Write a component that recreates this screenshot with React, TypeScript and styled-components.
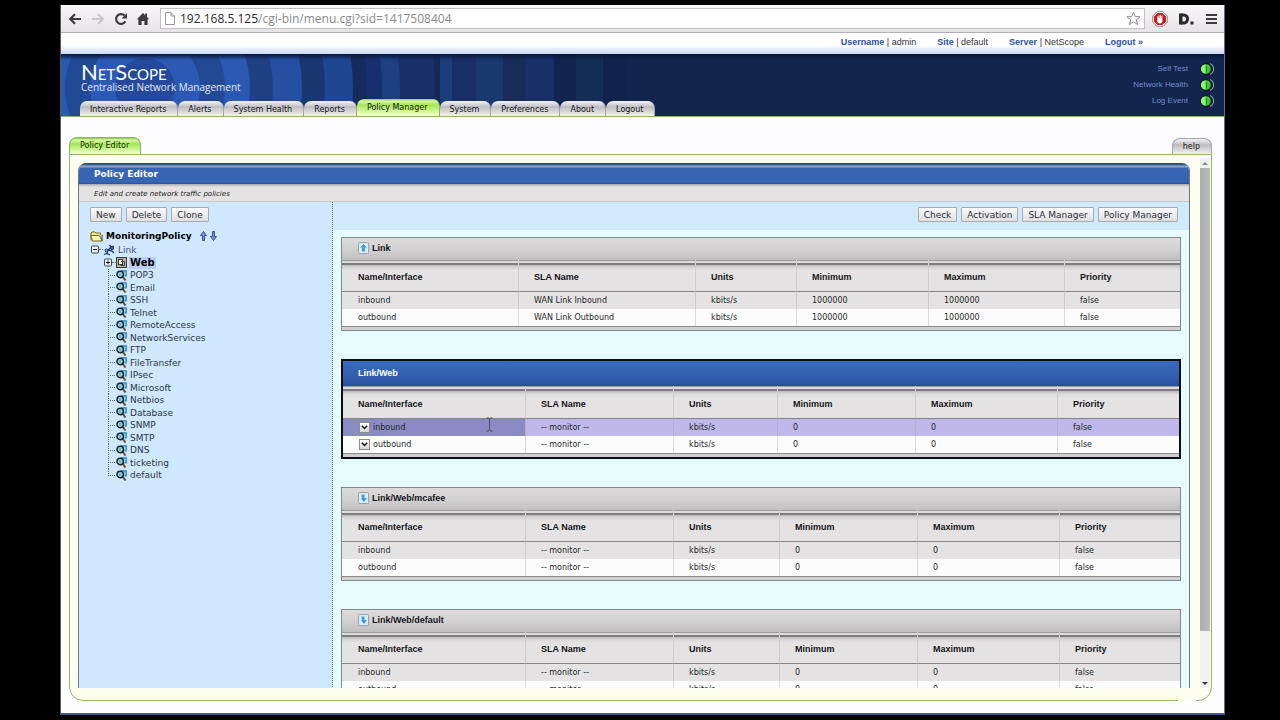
import React from 'react';
import styled, { createGlobalStyle, css } from 'styled-components';

const ui = "'DejaVu Sans', Verdana, sans-serif";
const arial = "'Liberation Sans', Arial, sans-serif";
const humanist = "'Open Sans', 'Noto Sans', sans-serif";

const GlobalStyle = createGlobalStyle`
  *, *::before, *::after { box-sizing: border-box; }
  body { margin: 0; background: #000; font-family: ${ui}; color: #222; }
  button { font-family: inherit; cursor: pointer; }
  a { color: inherit; text-decoration: none; }
  svg { display: block; }
`;

const Desktop = styled.div`
  height: 100vh;
  min-height: 480px;
  padding: 5px 55px 5px 60px;
  background: #000;
`;

const Browser = styled.div`
  display: flex;
  flex-direction: column;
  height: 100%;
  background: #fdfcfe;
  border: solid #55555c;
  border-width: 0 1px 2px;
  border-right-color: #6a6aa0;
  border-bottom-color: #3c5a94;
`;

const Toolbar = styled.div`
  display: flex;
  flex: none;
  align-items: center;
  height: 28px;
  padding: 0 1px 0 6px;
  background: linear-gradient(#f8f6f8, #e6e4e7);
  border-bottom: 1px solid #b3b1b4;
`;

const ChromeButton = styled.button<{ $w: number }>`
  display: grid;
  place-items: center;
  width: ${p => p.$w}px;
  height: 20px;
  padding: 0;
  border: 0;
  background: none;
`;

const AddressBar = styled.div`
  display: flex;
  flex: 1;
  align-items: center;
  height: 21px;
  margin: 0 2px;
  padding: 0 3px 0 4px;
  background: #fff;
  border: 1px solid #c2c0c3;
`;

const Url = styled.span`
  flex: 1;
  margin-left: 5px;
  font: 12px/18px ${humanist};
  color: #8b898c;
  b { font-weight: 400; color: #2b2b2b; }
`;

const TopBar = styled.div`
  display: flex;
  flex: none;
  justify-content: flex-end;
  gap: 21px;
  height: 21px;
  padding-right: 81px;
  font: 9px/18px ${arial};
  color: #333;
  background: linear-gradient(#fff 0, #fff 12px, #cfdcf4 20px);
  b { color: #2d509c; }
`;

const Banner = styled.header`
  display: flex;
  position: relative;
  flex: none;
  justify-content: space-between;
  height: 63px;
  background: #12254f;
  border-bottom: 1px solid #8fae72;
  overflow: hidden;
`;

const Rings = styled.svg`
  position: absolute;
  inset: 0 auto auto 0;
`;

const BannerShade = styled.div`
  position: absolute;
  inset: 0 0 auto 0;
  height: 6px;
  background: linear-gradient(#081638, rgba(8, 22, 56, 0));
`;

const BannerMain = styled.div`
  display: flex;
  position: relative;
  flex-direction: column;
  justify-content: space-between;
  padding-left: 19px;
`;

const Brand = styled.div`
  padding: 9px 0 0 1px;
  color: #fff;
`;

const BrandName = styled.div`
  font: small-caps 22px/18px Lato, sans-serif;
`;

const Tagline = styled.div`
  font: 10px/12px ${humanist};
  color: #e4ebfa;
`;

const Tabs = styled.nav`
  display: flex;
  align-items: flex-end;
`;

const greenTab = css`
  background: linear-gradient(#8fc64a 0, #d9f7a8 2px, #a5e558 6px, #c9f58f 11px, #f4ffe2 100%);
  border-color: #86b85a;
`;

const greyTab = css`
  background: linear-gradient(#f2f2f7 0, #d9d9df 3px, #bdbcc0 6px, #d5d4d6 10px, #f2f2ef 100%);
  border-color: #a3a3ab;
`;

const Tab = styled.a<{ $active?: boolean }>`
  height: ${p => (p.$active ? 17 : 15)}px;
  padding: 1px 11px 0 10px;
  border: solid;
  border-width: 0 1px 0 0;
  border-radius: 7px 7px 0 0;
  font: 8px/16px ${ui};
  color: #16161c;
  white-space: nowrap;
  ${p => (p.$active ? greenTab : greyTab)}
`;

const StatusList = styled.ul`
  display: flex;
  position: relative;
  flex-direction: column;
  gap: 2px;
  margin: 0;
  padding: 8px 10px 0 0;
  list-style: none;
`;

const Status = styled.li`
  display: flex;
  align-items: center;
  justify-content: flex-end;
  gap: 12px;
  font: 8px/14px ${arial};
  color: #748cc6;
`;

const Main = styled.main`
  display: flex;
  flex: 1;
  flex-direction: column;
  min-height: 0;
  padding: 20px 12px 12px 8px;
`;

const SubTabs = styled.div`
  display: flex;
  flex: none;
  align-items: flex-end;
  justify-content: space-between;
  height: 17px;
`;

const SubTab = styled.a<{ $active?: boolean }>`
  position: relative;
  z-index: 1;
  height: ${p => (p.$active ? 17 : 16)}px;
  padding: 0 11px 0 10px;
  border: 1px solid;
  border-bottom: 0;
  border-radius: 8px 8px 0 0;
  font: 8px/16px ${ui};
  color: #1c2b14;
  ${p => (p.$active ? greenTab : greyTab)}
`;

const Frame = styled.div`
  display: flex;
  position: relative;
  flex: 1;
  gap: 10px;
  min-height: 0;
  padding: 8px 1px 12px 8px;
  background: #fefef0;
  border: 1px solid #93b56c;
  border-radius: 0 0 14px 14px;
`;

const FrameGap = styled.span`
  position: absolute;
  right: 15px;
  bottom: -1px;
  width: 18px;
  height: 2px;
  background: #fdfcfe;
`;

const Viewport = styled.div`
  flex: 1;
  min-width: 0;
  overflow: hidden;
`;

const Panel = styled.section`
  border: solid #6c7684;
  border-width: 0 1px;
  border-radius: 8px 8px 0 0;
  overflow: hidden;
`;

const PanelTitle = styled.h1`
  height: 21px;
  margin: 0;
  padding-left: 15px;
  font: bold 9px/22px ${ui};
  color: #fff;
  background: linear-gradient(#26478c 0, #26478c 1px, #4a63a4 2px, #8ba2d4 3px, #8ba2d4 4px, #3765b3 5px, #3765b3 19px, #2c4f92 21px);
`;

const PanelNote = styled.p`
  height: 18px;
  margin: 0;
  padding-left: 15px;
  font: italic 7px/20px ${ui};
  color: #1d1d1d;
  background: linear-gradient(#a9a8ac, #e4e2e3 3px);
  border-bottom: 1px solid #c9c7c9;
`;

const Columns = styled.div`
  display: flex;
`;

const Side = styled.aside`
  flex: none;
  width: 254px;
  padding: 5px 0 200px 11px;
  background: #d0e8fe;
  border-right: 1px dotted #66707c;
`;

const Content = styled.div`
  flex: 1;
  min-width: 0;
  background: #e6fcfb;
`;

const ButtonRow = styled.div`
  display: flex;
  gap: 4px;
`;

const ContentBar = styled(ButtonRow)`
  justify-content: flex-end;
  height: 28px;
  padding: 5px 11px 0 0;
  background: #d0e9fb;
`;

const Button = styled.button`
  height: 15px;
  padding: 0 5px;
  border: 1px solid #a7abb2;
  border-radius: 1px;
  background: linear-gradient(#fbfbfc, #dfdfe2);
  font-size: 9px;
  line-height: 12px;
  color: #2e2e33;
  white-space: nowrap;
`;

const TreeRoot = styled.div`
  display: flex;
  align-items: center;
  height: 14px;
  margin-top: 7px;
  font: bold 9px/14px ${ui};
  color: #000;
`;

const Arrows = styled.span`
  display: flex;
  gap: 3px;
  margin-left: 8px;
`;

const Tree = styled.ul`
  margin: 0;
  padding: 0;
  list-style: none;
  font: 9px/12px ${ui};
  color: #2b3746;
`;

const LinkNode = styled.li`
  > div { display: flex; align-items: center; height: 13px; padding-left: 1px; color: #4b4b78; }
`;

const Nested = styled(Tree)`
  padding-left: 14px;
`;

const Dash = styled.span<{ $w: number }>`
  width: ${p => p.$w}px;
  border-top: 1px dotted #5b6672;
`;

const Leaf = styled.li<{ $expandable?: boolean }>`
  display: flex;
  align-items: center;
  height: 12px;
  padding-left: ${p => (p.$expandable ? 0 : 4)}px;
  &:nth-child(odd) { height: 13px; }
`;

const Branch = styled.span<{ $last?: boolean }>`
  align-self: stretch;
  width: 8px;
  background:
    repeating-linear-gradient(#5b6672 0 1px, transparent 1px 2px) 0 0 / 1px ${p => (p.$last ? '50%' : '100%')} no-repeat,
    repeating-linear-gradient(90deg, #5b6672 0 1px, transparent 1px 2px) 0 50% / 8px 1px no-repeat;
`;

const Label = styled.a<{ $selected?: boolean }>`
  margin-left: 3px;
  ${p => p.$selected && css`
    margin-left: 2px;
    padding: 0 1px;
    font-weight: bold;
    font-size: 10px;
    color: #000;
    background: #b9cdf6;
  `}
`;

const Cards = styled.div`
  display: flex;
  flex-direction: column;
  gap: 28px;
  padding: 7px 8px 20px;
`;

const Card = styled.section<{ $selected?: boolean }>`
  border: ${p => (p.$selected ? '2px solid #0b0d14' : '1px solid #80898c')};
`;

const CardTitle = styled.h2<{ $selected?: boolean }>`
  display: flex;
  align-items: center;
  gap: 3px;
  height: ${p => (p.$selected ? 25 : 22)}px;
  margin: 0;
  padding: 0 0 2px ${p => (p.$selected ? 15 : 16)}px;
  font: bold 9px/20px ${arial};
  color: ${p => (p.$selected ? '#fff' : '#16161a')};
  background: ${p => (p.$selected
    ? 'linear-gradient(#3a69bb, #3462b2 50%, #27509a)'
    : 'linear-gradient(#dcdadb, #d3d1d2 50%, #c0bebf)')};
`;

const Grid = styled.table`
  width: 100%;
  table-layout: fixed;
  border-collapse: separate;
  border-spacing: 0;
  font: 8px/17px ${ui};
  color: #1f2a2a;
  background: #fdfcfd;
`;

const HeadCell = styled.th<{ $tall?: boolean }>`
  height: ${p => (p.$tall ? 33 : 32)}px;
  padding: ${p => (p.$tall ? 4 : 2)}px 0 0 15px;
  border-left: 1px solid #cfcdcf;
  border-bottom: 1px solid #858385;
  font: bold 9px/14px ${arial};
  text-align: left;
  color: #16161a;
  background: linear-gradient(#9c9a9c 0 1px, #dddbdc 1px 3px, #7f7d7e 3px 5px, #bdbbbc 5px, #dbd9da 8px, #e4e2e3 11px) border-box;
  &:first-child { padding-left: ${p => (p.$tall ? 15 : 16)}px; border-left: 0; }
`;

const Row = styled.tr<{ $tone: 'shade' | 'plain' | 'active' }>`
  background: ${p => ({ shade: '#e4e2e3', plain: '#fdfcfd', active: '#c0b8ea' })[p.$tone]};
`;

const Cell = styled.td<{ $hot?: boolean }>`
  position: relative;
  height: 17px;
  padding: 0 0 0 15px;
  border-left: 1px solid ${p => (p.$hot ? 'transparent' : 'rgba(160, 158, 164, 0.35)')};
  white-space: nowrap;
  background: ${p => (p.$hot ? '#8a8ac4' : 'none')};
  &:first-child { padding-left: 16px; border-left: 0; }
`;

const RowName = styled.span`
  display: flex;
  align-items: center;
  gap: 3px;
`;

const DropButton = styled.button`
  display: grid;
  place-items: center;
  width: 11px;
  height: 11px;
  padding: 0;
  border: 1px solid #8d8d94;
  background: linear-gradient(#fff, #d4d4d8);
`;

const TextCursor = styled.svg`
  position: absolute;
  right: 32px;
  top: -2px;
`;

const CardFoot = styled.div`
  height: 4px;
  border-top: 1px solid #8c8a8c;
  background: #cfd1d1;
`;

const ScrollTrack = styled.div`
  display: flex;
  flex: none;
  flex-direction: column;
  justify-content: space-between;
  width: 10px;
  margin: -5px 0 0;
  background: #f3f2f3;
`;

const ScrollArrow = styled.span`
  display: grid;
  place-items: center;
  height: 10px;
`;

const Thumb = styled.div`
  flex: 0 1 463px;
  margin-bottom: auto;
  background: linear-gradient(90deg, #adadad, #bdbdbd);
`;

const SCREEN_TABS = ['Interactive Reports', 'Alerts', 'System Health', 'Reports', 'Policy Manager', 'System', 'Preferences', 'About', 'Logout'];

const CLASSES = ['POP3', 'Email', 'SSH', 'Telnet', 'RemoteAccess', 'NetworkServices', 'FTP', 'FileTransfer', 'IPsec', 'Microsoft', 'Netbios', 'Database', 'SNMP', 'SMTP', 'DNS', 'ticketing', 'default'];

const HEADS = ['Name/Interface', 'SLA Name', 'Units', 'Minimum', 'Maximum', 'Priority'];

type Policy = {
  title: string;
  icon?: 'up' | 'down';
  widths: number[];
  rows: string[][];
};

const monitor = (name: string) => [name, '-- monitor --', 'kbits/s', '0', '0', 'false'];

const POLICIES: Policy[] = [
  {
    title: 'Link',
    icon: 'up',
    widths: [176, 177, 101, 132, 136, 116],
    rows: [
      ['inbound', 'WAN Link Inbound', 'kbits/s', '1000000', '1000000', 'false'],
      ['outbound', 'WAN Link Outbound', 'kbits/s', '1000000', '1000000', 'false'],
    ],
  },
  { title: 'Link/Web', widths: [182, 148, 104, 138, 142, 122], rows: [monitor('inbound'), monitor('outbound')] },
  { title: 'Link/Web/mcafee', icon: 'down', widths: [183, 148, 106, 138, 142, 121], rows: [monitor('inbound'), monitor('outbound')] },
  { title: 'Link/Web/default', icon: 'down', widths: [183, 148, 106, 138, 142, 121], rows: [monitor('inbound'), monitor('outbound')] },
];

const BackIcon = ({ color }: { color: string }) => (
  <svg width="14" height="12" viewBox="0 0 14 12" fill="none" stroke={color} strokeWidth="2.2">
    <path d="M13 6H3M7 1.2L2.2 6L7 10.8" />
  </svg>
);

const ForwardIcon = () => (
  <svg width="14" height="12" viewBox="0 0 14 12" fill="none" stroke="#c9c7ca" strokeWidth="2.2">
    <path d="M1 6h10M7 1.2L11.8 6L7 10.8" />
  </svg>
);

const ReloadIcon = () => (
  <svg width="14" height="14" viewBox="0 0 14 14" fill="none">
    <path d="M11.4 9.2A4.9 4.9 0 1 1 10.6 3.6" stroke="#3c3b3d" strokeWidth="2.2" />
    <path d="M13 1v5.4H7.6z" fill="#3c3b3d" />
  </svg>
);

const HomeIcon = () => (
  <svg width="14" height="14" viewBox="0 0 14 14" fill="#3c3b3d">
    <path d="M7 1L0.8 7.2h1.6V13h3.2V9h2.8v4h3.2V7.2h1.6L11 5V1.6H9.2v1.6z" />
  </svg>
);

const PageIcon = () => (
  <svg width="10" height="13" viewBox="0 0 10 13" fill="#fff" stroke="#9a989b">
    <path d="M0.5 0.5h5.5l3.5 3.5v8.5h-9zM6 0.5V4h3.5" />
  </svg>
);

const StarIcon = () => (
  <svg width="15" height="15" viewBox="0 0 15 15" fill="#fff" stroke="#8a888b">
    <path d="M7.5 1l1.7 4.6 4.9.2-3.8 3 1.3 4.7-4.1-2.7-4.1 2.7 1.3-4.7-3.8-3 4.9-.2z" />
  </svg>
);

const BlockIcon = () => (
  <svg width="16" height="16" viewBox="0 0 16 16">
    <path d="M5 .7h6L15.3 5v6L11 15.3H5L.7 11V5z" fill="#fff" stroke="#b05050" strokeWidth=".8" />
    <path d="M5.6 2h4.8L14 5.6v4.8L10.4 14H5.6L2 10.4V5.6z" fill="#c81a20" />
    <path d="M5.3 8V5.3h.9V7h.4V4.2h1V7h.4V3.800h1V7h.4V4.600h1v5.200c0 1.700-.9 2.600-2.500 2.600-1.500 0-2.100-.7-2.600-1.900z" fill="#fff" />
  </svg>
);

const DisconnectIcon = () => (
  <svg width="17" height="14" viewBox="0 0 17 14">
    <rect x="1" y="1.5" width="3.5" height="11" fill="#2b2a2c" />
    <path d="M3 3h2.6a3.8 3.8 0 0 1 0 8H3" fill="none" stroke="#2b2a2c" strokeWidth="3" />
    <rect x="12.5" y="9.5" width="3" height="3" fill="#2b2a2c" />
  </svg>
);

const MenuIcon = () => (
  <svg width="11" height="12" viewBox="0 0 11 12" fill="#3c3b3d">
    <path d="M0 1h11v2H0zM0 5h11v2H0zM0 9h11v2H0z" />
  </svg>
);

const RINGS: [number, string][] = [
  [255, '#1d3f80'], [237, '#172f6e'], [222, '#162a5e'], [208, '#1f4790'], [180, '#1a3670'],
  [157, '#244fa2'], [128, '#1f4184'], [105, '#2b58b0'], [80, '#224993'], [55, '#2b59b4'], [30, '#24499a'],
];

const STRIPES: [number, number, string][] = [
  [255, 287, '#17306a'], [287, 304, '#142857'], [304, 333, '#1b3c75'], [333, 347, '#142a5a'], [347, 379, '#14285a'],
  [379, 391, '#1c3e78'], [391, 415, '#182e66'], [415, 442, '#18386e'], [442, 465, '#172c56'], [465, 493, '#182f68'],
  [493, 515, '#10244f'], [515, 542, '#142d56'], [542, 565, '#10224d'],
];

const BannerArt = () => (
  <Rings width="600" height="63" viewBox="0 0 600 63" aria-hidden="true">
    {STRIPES.map(([from, to, color]) => (
      <rect key={from} x={from} y="0" width={to - from + 1} height="63" fill={color} />
    ))}
    <circle cx="84" cy="34" r="290" fill="#17306a" />
    {RINGS.map(([r, color]) => (
      <circle key={r} cx="84" cy="34" r={r} fill={color} />
    ))}
  </Rings>
);

const LightIcon = () => (
  <svg width="14" height="14" viewBox="0 0 14 14">
    <circle cx="6.5" cy="7" r="6.5" fill="#0b1a2c" />
    <path d="M10 1.5a6 6 0 0 1 0 11" fill="none" stroke="#8f9f98" strokeWidth="1.2" />
    <circle cx="6" cy="7" r="4.8" fill="#3fc32f" />
    <path d="M5.5 2.4a4.6 4.6 0 0 0 0 9.2z" fill="#8df07e" />
    <path d="M6.5 4v6" stroke="#1d8a1a" />
  </svg>
);

const FolderIcon = () => (
  <svg width="13" height="11" viewBox="0 0 13 11">
    <path d="M1 9.500V2l1-1h3l1 1h4.500v2" fill="#f4e68e" stroke="#75692a" />
    <path d="M.8 4.500h8.700L12 10H2.500z" fill="#fbf3ac" stroke="#75692a" />
    <path d="M12 4v6" stroke="#38351c" />
  </svg>
);

const ArrowIcon = ({ down }: { down?: boolean }) => (
  <svg width="7" height="10" viewBox="0 0 7 10">
    <path
      d={down ? 'M2.5 .5h2v5h2L3.5 9.5L.5 5.5h2z' : 'M2.5 9.5h2v-5h2L3.5 .5L.5 4.5h2z'}
      fill="#7f92e0"
      stroke="#34448c"
      strokeWidth=".9"
    />
  </svg>
);

const ToggleIcon = ({ open }: { open?: boolean }) => (
  <svg width="8" height="9" viewBox="0 0 8 9">
    <rect x=".5" y="1" width="7" height="7" rx="1" fill="#eef6ff" stroke="#3f4750" />
    <path d={open ? 'M2 4.5h4' : 'M2 4.5h4M4 2.5v4'} stroke="#15181c" />
  </svg>
);

const LinkIcon = () => (
  <svg width="12" height="12" viewBox="0 0 12 12" fill="none" stroke="#22346e">
    <path d="M1 10.5l3-1 3 1.5M4 9.5L5 6l3-3 3-1M5 6l4 1 2 2M8 3L6.5 1" strokeWidth="1.3" />
    <circle cx="3.5" cy="6.5" r="1.5" fill="#7e95d8" />
    <circle cx="9" cy="4" r="1.7" fill="#4663b8" />
  </svg>
);

const GroupIcon = () => (
  <svg width="11" height="11" viewBox="0 0 11 11" fill="none" stroke="#3c3d34">
    <rect x=".5" y=".5" width="10" height="10" fill="#b6b49a" />
    <rect x="2.5" y="2.5" width="4" height="5" fill="#eeeedd" />
    <path d="M5 4.5h3.5v4H4.5" />
  </svg>
);

const ClassIcon = () => (
  <svg width="11" height="11" viewBox="0 0 11 11">
    <path d="M5 .8h5.2v5H8.5" fill="#9bd6f5" stroke="#1d82c4" strokeWidth="1.2" />
    <path d="M6.5 6.5l3 4" stroke="#6a4f22" strokeWidth="2" />
    <circle cx="4.2" cy="4.5" r="3.2" fill="#a5d9e0" stroke="#15262e" strokeWidth="1.5" />
    <path d="M4 3.2v2.6" stroke="#2f7d84" />
  </svg>
);

const MoveIcon = ({ down }: { down?: boolean }) => (
  <svg width="11" height="12" viewBox="0 0 11 12">
    <rect x=".5" y=".5" width="10" height="11" rx="1" fill="#dceaf3" stroke="#8fa3b0" />
    {down
      ? <path d="M3.5 2.5h3V6H9l-3 4-3-3.5h.8z" fill="#3f9fdc" />
      : <path d="M5.5 2L9 5.5H7v4H4v-4H2z" fill="#3f9fdc" />}
  </svg>
);

const ChevronIcon = () => (
  <svg width="7" height="5" viewBox="0 0 7 5" fill="none" stroke="#111" strokeWidth="1.5">
    <path d="M.8 .8L3.5 3.5L6.2 .8" />
  </svg>
);

const IBeam = () => (
  <TextCursor width="7" height="15" viewBox="0 0 7 15" fill="none" stroke="#4a4a5c">
    <path d="M.5 1h2.2l.8.8.8-.8h2.2M3.5 2v11M.5 14h2.2l.8-.8.8.8h2.2" />
  </TextCursor>
);

function PolicyCard({ policy }: { policy: Policy }) {
  const selected = !policy.icon;
  return (
    <Card $selected={selected}>
      <CardTitle $selected={selected}>
        {policy.icon && <MoveIcon down={policy.icon === 'down'} />}
        {policy.title}
      </CardTitle>
      <Grid>
        <colgroup>
          {policy.widths.map((w, i) => <col key={i} width={w} />)}
        </colgroup>
        <thead>
          <tr>{HEADS.map(h => <HeadCell key={h} $tall={selected}>{h}</HeadCell>)}</tr>
        </thead>
        <tbody>
          {policy.rows.map((row, r) => (
            <Row key={row[0]} $tone={r ? 'plain' : selected ? 'active' : 'shade'}>
              {row.map((value, c) => (
                <Cell key={c} $hot={selected && r === 0 && c === 0}>
                  {selected && c === 0 ? (
                    <RowName>
                      <DropButton aria-label={`${value} actions`}><ChevronIcon /></DropButton>
                      {value}
                      {r === 0 && <IBeam />}
                    </RowName>
                  ) : value}
                </Cell>
              ))}
            </Row>
          ))}
        </tbody>
      </Grid>
      <CardFoot />
    </Card>
  );
}

export default function App() {
  return (
    <>
      <GlobalStyle />
      <Desktop>
        <Browser>
          <Toolbar>
            <ChromeButton $w={15} aria-label="Back"><BackIcon color="#3c3b3d" /></ChromeButton>
            <ChromeButton $w={31} aria-label="Forward"><ForwardIcon /></ChromeButton>
            <ChromeButton $w={15} aria-label="Reload"><ReloadIcon /></ChromeButton>
            <ChromeButton $w={30} aria-label="Home"><HomeIcon /></ChromeButton>
            <AddressBar>
              <PageIcon />
              <Url><b>192.168.5.125</b>/cgi-bin/menu.cgi?sid=1417508404</Url>
              <StarIcon />
            </AddressBar>
            <ChromeButton $w={26} aria-label="Ad blocker"><BlockIcon /></ChromeButton>
            <ChromeButton $w={26} aria-label="Disconnect"><DisconnectIcon /></ChromeButton>
            <ChromeButton $w={24} aria-label="Menu"><MenuIcon /></ChromeButton>
          </Toolbar>

          <TopBar>
            <span><b>Username</b> | admin</span>
            <span><b>Site</b> | default</span>
            <span><b>Server</b> | NetScope</span>
            <a href="#logout"><b>Logout »</b></a>
          </TopBar>

          <Banner>
            <BannerArt />
            <BannerShade />
            <BannerMain>
              <Brand>
                <BrandName>NetScope</BrandName>
                <Tagline>Centralised Network Management</Tagline>
              </Brand>
              <Tabs>
                {SCREEN_TABS.map(t => (
                  <Tab key={t} href="#tab" $active={t === 'Policy Manager'}>{t}</Tab>
                ))}
              </Tabs>
            </BannerMain>
            <StatusList>
              {['Self Test', 'Network Health', 'Log Event'].map(s => (
                <Status key={s}>{s}<LightIcon /></Status>
              ))}
            </StatusList>
          </Banner>

          <Main>
            <SubTabs>
              <SubTab href="#editor" $active>Policy Editor</SubTab>
              <SubTab href="#help">help</SubTab>
            </SubTabs>
            <Frame>
              <Viewport>
                <Panel>
                  <PanelTitle>Policy Editor</PanelTitle>
                  <PanelNote>Edit and create network traffic policies</PanelNote>
                  <Columns>
                    <Side>
                      <ButtonRow>
                        <Button>New</Button>
                        <Button>Delete</Button>
                        <Button>Clone</Button>
                      </ButtonRow>
                      <TreeRoot>
                        <FolderIcon />
                        <Label href="#root">MonitoringPolicy</Label>
                        <Arrows><ArrowIcon /><ArrowIcon down /></Arrows>
                      </TreeRoot>
                      <Tree>
                        <LinkNode>
                          <div>
                            <ToggleIcon open /><Dash $w={4} /><LinkIcon />
                            <Label href="#link">Link</Label>
                          </div>
                          <Nested>
                            <Leaf $expandable>
                              <ToggleIcon /><Dash $w={4} /><GroupIcon />
                              <Label href="#web" $selected>Web</Label>
                            </Leaf>
                            {CLASSES.map((c, i) => (
                              <Leaf key={c}>
                                <Branch $last={i === CLASSES.length - 1} /><ClassIcon />
                                <Label href="#class">{c}</Label>
                              </Leaf>
                            ))}
                          </Nested>
                        </LinkNode>
                      </Tree>
                    </Side>
                    <Content>
                      <ContentBar>
                        <Button>Check</Button>
                        <Button>Activation</Button>
                        <Button>SLA Manager</Button>
                        <Button>Policy Manager</Button>
                      </ContentBar>
                      <Cards>
                        {POLICIES.map(p => <PolicyCard key={p.title} policy={p} />)}
                      </Cards>
                    </Content>
                  </Columns>
                </Panel>
              </Viewport>
              <ScrollTrack aria-hidden="true">
                <ScrollArrow><svg width="6" height="3"><path d="M0 3h6L3 0z" fill="#8a8a8a" /></svg></ScrollArrow>
                <Thumb />
                <ScrollArrow><svg width="6" height="3"><path d="M0 0h6L3 3z" fill="#333" /></svg></ScrollArrow>
              </ScrollTrack>
              <FrameGap />
            </Frame>
          </Main>
        </Browser>
      </Desktop>
    </>
  );
}
